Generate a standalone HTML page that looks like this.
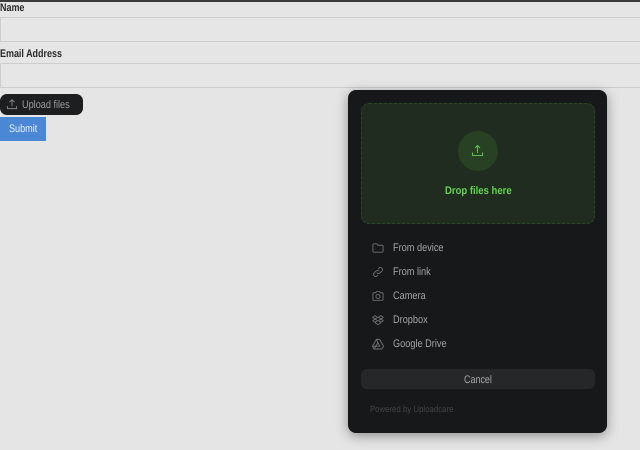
<!DOCTYPE html>
<html>
<head>
<meta charset="utf-8">
<style>
html,body{margin:0;padding:0}
body{width:640px;height:450px;overflow:hidden;background:#e5e5e5;position:relative;font-family:"Liberation Sans",sans-serif;filter:blur(.35px);text-rendering:geometricPrecision}
div,span,svg{position:absolute;box-sizing:border-box}
.t{white-space:nowrap;line-height:14px;transform-origin:0 50%}
.lab{left:0;font-size:11px;font-weight:bold;color:#2a2a2a;transform:scaleX(.815)}
.inp{left:0;width:660px;height:25px;border:1px solid #cdcdcd;background:#e6e6e6}
.item{left:393.3px;font-size:11px;color:#a4a4a4;transform:scaleX(.835)}
svg{fill:none;stroke-linecap:round;stroke-linejoin:round}
.ic{left:371.5px;width:12px;height:12px;stroke:#6f6f6f;stroke-width:1}
</style>
</head>
<body>
<div style="left:0;top:0;width:640px;height:2px;background:#3a3a3a"></div>
<div class="t lab" style="top:1px">Name</div>
<div class="inp" style="top:17px"></div>
<div class="t lab" style="top:47px">Email Address</div>
<div class="inp" style="top:63px"></div>

<div style="left:0;top:94px;width:83px;height:21px;background:#1d1e20;border-radius:7px"></div>
<svg style="left:6px;top:98px;width:12px;height:12px;stroke:#858585;stroke-width:1" viewBox="0 0 13 13"><path d="M6.5 8.5V2M4 4.3 6.5 1.8 9 4.3M1.5 9v2.5h10V9"/></svg>
<div class="t" style="left:22px;top:97.5px;font-size:11px;color:#9c9c9c;transform:scaleX(.83)">Upload files</div>

<div style="left:0;top:117px;width:46px;height:24px;background:#4a88d6"></div>
<div class="t" style="left:9.3px;top:121.5px;font-size:11px;color:#e6eefa;transform:scaleX(.825)">Submit</div>

<div style="left:348px;top:90px;width:259px;height:343px;background:#17181a;border-radius:8px;box-shadow:0 3px 12px rgba(0,0,0,.38)"></div>
<div style="left:361px;top:103px;width:234px;height:121px;background:#1f2c1f;border:1px dashed #2c4728;border-radius:8px"></div>
<div style="left:457.5px;top:131px;width:40px;height:40px;border-radius:50%;background:#284024"></div>
<svg style="left:471px;top:144px;width:13px;height:13px;stroke:#5cbd4c;stroke-width:1.1" viewBox="0 0 13 13"><path d="M6.5 9V1.5M4 4 6.5 1.5 9 4M1.5 8.5v3h10v-3" stroke-linecap="butt" stroke-linejoin="miter"/></svg>
<div class="t" style="left:444.5px;top:183.5px;font-size:11px;font-weight:bold;color:#62d64f;transform:scaleX(.865)">Drop files here</div>

<svg class="ic" style="top:242px" viewBox="0 0 13 13"><path d="M1 3a1 1 0 0 1 1-1h3l1.3 1.5H11a1 1 0 0 1 1 1V10a1 1 0 0 1-1 1H2a1 1 0 0 1-1-1Z"/></svg>
<div class="t item" style="top:241.3px">From device</div>

<svg class="ic" style="top:266px" viewBox="0 0 13 13"><path d="M5.5 7.5a2.2 2.2 0 0 0 3.2 0l2.2-2.2a2.3 2.3 0 0 0-3.2-3.2L6.8 3M7.5 5.5a2.2 2.2 0 0 0-3.2 0L2.1 7.7a2.3 2.3 0 0 0 3.2 3.2L6.2 10"/></svg>
<div class="t item" style="top:265.3px">From link</div>

<svg class="ic" style="top:290px" viewBox="0 0 13 13"><path d="M1 4a1 1 0 0 1 1-1h2l1-1.3h3L9 3h2a1 1 0 0 1 1 1v6.2a1 1 0 0 1-1 1H2a1 1 0 0 1-1-1Z"/><circle cx="6.5" cy="7" r="2.2"/></svg>
<div class="t item" style="top:289.3px">Camera</div>

<svg class="ic" style="top:314px" viewBox="0 0 13 13"><path d="M3.3 1.8 6 3.6 3.3 5.4.8 3.6ZM9.7 1.8 12.2 3.6 9.7 5.4 7 3.6ZM3.3 5.4 6 7.2 3.3 9 .8 7.2ZM9.7 5.4 12.2 7.2 9.7 9 7 7.2ZM3.5 9.6 6.5 11.5 9.5 9.6"/></svg>
<div class="t item" style="top:313.3px">Dropbox</div>

<svg class="ic" style="top:338px" viewBox="0 0 13 13"><path d="M4.7 1.5h3.6l4.2 7.4-1.8 3H2.3L.5 8.9ZM4.7 1.5 8.4 8.9H.5M2.3 11.9 6.5 5"/></svg>
<div class="t item" style="top:337.3px">Google Drive</div>

<div style="left:361px;top:369px;width:234px;height:20px;background:#262729;border-radius:6px"></div>
<div class="t" style="left:464px;top:372.5px;font-size:11px;color:#a8a8a8;transform:scaleX(.815)">Cancel</div>
<div class="t" style="left:370px;top:401.5px;font-size:9px;letter-spacing:.1px;color:#454648;transform:scaleX(.85)">Powered by Uploadcare</div>
</body>
</html>
